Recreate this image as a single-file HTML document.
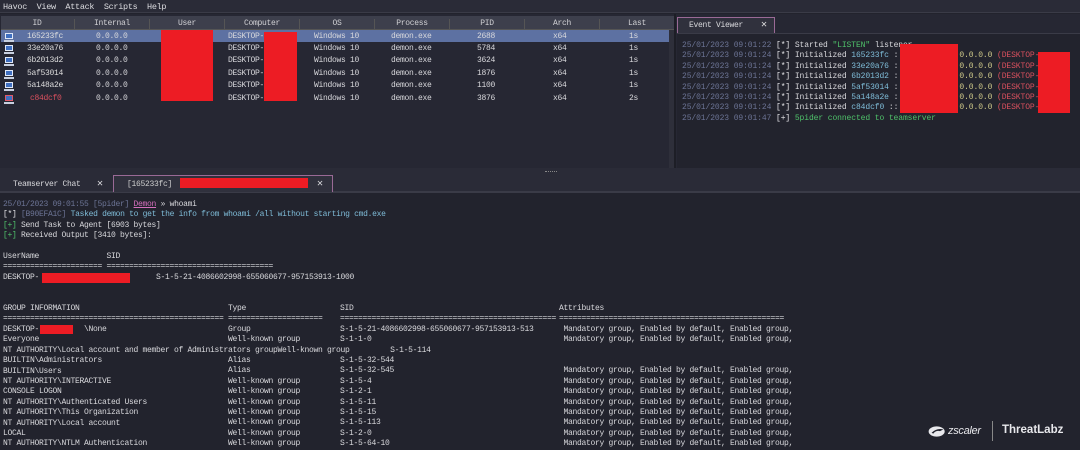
<!DOCTYPE html>
<html><head><meta charset="utf-8"><style>
*{margin:0;padding:0;box-sizing:border-box}
body{width:1080px;height:450px;overflow:hidden;background:#22232d;font-family:"Liberation Mono",monospace;font-size:8px;letter-spacing:-0.3px;color:#d8d8dc;position:relative}
.a{position:absolute;white-space:pre}
.r{position:absolute;background:#ed1c24}
.ts{color:#6b7394}.g{color:#4fc26a}.c{color:#7fbcd8}.y{color:#cfc98a}.rd{color:#d9505e}.w{color:#e4e4e8}
</style></head><body>
<!-- menu -->
<div class="a" style="left:0;top:0;width:1080px;height:13px;background:#2a2b37;border-bottom:1px solid #3a3b47"></div>
<div class="a" style="left:3px;top:2px;font-size:8.5px;color:#dcdce0">Havoc  View  Attack  Scripts  Help</div>
<!-- table panel -->
<div class="a" style="left:0;top:14px;width:674px;height:154px;background:#262733"></div>
<div class="a" style="left:1px;top:16px;width:673px;height:14px;background:#3d3f4c;border-bottom:1px solid #555"></div>
<div class="a" style="left:1px;top:30px;width:668px;height:12px;background:#5d71a2"></div>
<div class="a" style="left:669px;top:30px;width:5px;height:138px;background:#2e2f3a"></div>
<div id="hd"></div>
<!-- event viewer -->
<div class="a" style="left:674px;top:14px;width:406px;height:154px;background:#262733;border-left:2px solid #1d1e26"></div>
<div class="a" style="left:677px;top:17px;width:98px;height:16px;background:#30313d;border:1px solid #9a6a96;border-bottom:none"></div>
<div class="a" style="left:689px;top:21px;color:#d8d8dc">Event Viewer</div>
<div class="a" style="left:761px;top:19px;font-size:10px;color:#ddd">✕</div>
<div class="a" style="left:677px;top:33px;width:403px;height:135px;background:#22232d;border-top:1px solid #3a3b47"></div>
<div class="a" style="left:682px;top:41px;line-height:10.4px;letter-spacing:-0.1px"><span class="ts">25/01/2023 09:01:22</span> <span class="w">[*]</span> Started <span class="g">"LISTEN"</span> listener
<span class="ts">25/01/2023 09:01:24</span> <span class="w">[*]</span> Initialized <span class="c">165233fc</span> ::            <span class="y">0.0.0.0</span> <span class="rd">(DESKTOP-</span>
<span class="ts">25/01/2023 09:01:24</span> <span class="w">[*]</span> Initialized <span class="c">33e20a76</span> ::            <span class="y">0.0.0.0</span> <span class="rd">(DESKTOP-</span>
<span class="ts">25/01/2023 09:01:24</span> <span class="w">[*]</span> Initialized <span class="c">6b2013d2</span> ::            <span class="y">0.0.0.0</span> <span class="rd">(DESKTOP-</span>
<span class="ts">25/01/2023 09:01:24</span> <span class="w">[*]</span> Initialized <span class="c">5af53014</span> ::            <span class="y">0.0.0.0</span> <span class="rd">(DESKTOP-</span>
<span class="ts">25/01/2023 09:01:24</span> <span class="w">[*]</span> Initialized <span class="c">5a148a2e</span> ::            <span class="y">0.0.0.0</span> <span class="rd">(DESKTOP-</span>
<span class="ts">25/01/2023 09:01:24</span> <span class="w">[*]</span> Initialized <span class="c">c84dcf0</span> ::             <span class="y">0.0.0.0</span> <span class="rd">(DESKTOP-H</span>
<span class="ts">25/01/2023 09:01:47</span> <span class="w">[+]</span> <span class="g">5pider connected to teamserver</span></div>
<div class="r" style="left:900px;top:44px;width:58px;height:69px"></div>
<div class="r" style="left:1038px;top:52px;width:32px;height:61px"></div>
<!-- splitter & tabs -->
<div class="a" style="left:0;top:168px;width:1080px;height:25px;background:#2a2b37"></div>
<div class="a" style="left:545px;top:171px;width:12px;height:2px;border-top:1px dotted #888"></div>
<div class="a" style="left:0;top:191px;width:1080px;height:2px;background:#3a3b47"></div>
<div class="a" style="left:13px;top:180px">Teamserver Chat</div>
<div class="a" style="left:97px;top:178px;font-size:10px">✕</div>
<div class="a" style="left:113px;top:175px;width:220px;height:17px;background:#30313d;border:1px solid #9a6a96;border-bottom:none"></div>
<div class="a" style="left:127px;top:180px;color:#ccc">[165233fc]</div>
<div class="r" style="left:180px;top:178px;width:128px;height:10px"></div>
<div class="a" style="left:317px;top:178px;font-size:10px">✕</div>
<!-- console -->
<div class="a" style="left:3px;top:200px;line-height:10.4px"><span class="ts">25/01/2023 09:01:55 [5pider]</span> <span style="color:#d56fbd;text-decoration:underline">Demon</span> » whoami
<span class="w">[*]</span> <span class="ts">[B90EFA1C]</span> <span class="c">Tasked demon to get the info from whoami /all without starting cmd.exe</span>
<span class="g">[+]</span> Send Task to Agent [6903 bytes]
<span class="g">[+]</span> Received Output [3410 bytes]:

UserName               SID
====================== =====================================
DESKTOP-                          S-1-5-21-4086602998-655060677-957153913-1000


GROUP INFORMATION
=================================================
DESKTOP-          \None
Everyone
NT AUTHORITY\Local account and member of Administrators groupWell-known group         S-1-5-114
BUILTIN\Administrators
BUILTIN\Users
NT AUTHORITY\INTERACTIVE
CONSOLE LOGON
NT AUTHORITY\Authenticated Users
NT AUTHORITY\This Organization
NT AUTHORITY\Local account
LOCAL
NT AUTHORITY\NTLM Authentication</div>
<div class="r" style="left:42px;top:273px;width:88px;height:10px"></div>
<div class="r" style="left:40px;top:325px;width:33px;height:9px"></div>
<div class="a" style="left:228px;top:304px;line-height:10.4px">Type
=====================
Group
Well-known group

Alias
Alias
Well-known group
Well-known group
Well-known group
Well-known group
Well-known group
Well-known group
Well-known group</div>
<div class="a" style="left:340px;top:304px;line-height:10.4px">SID
================================================
S-1-5-21-4086602998-655060677-957153913-513
S-1-1-0

S-1-5-32-544
S-1-5-32-545
S-1-5-4
S-1-2-1
S-1-5-11
S-1-5-15
S-1-5-113
S-1-2-0
S-1-5-64-10</div>
<div class="a" style="left:559px;top:304px;line-height:10.4px">Attributes
==================================================
 Mandatory group, Enabled by default, Enabled group,
 Mandatory group, Enabled by default, Enabled group,


 Mandatory group, Enabled by default, Enabled group,
 Mandatory group, Enabled by default, Enabled group,
 Mandatory group, Enabled by default, Enabled group,
 Mandatory group, Enabled by default, Enabled group,
 Mandatory group, Enabled by default, Enabled group,
 Mandatory group, Enabled by default, Enabled group,
 Mandatory group, Enabled by default, Enabled group,
 Mandatory group, Enabled by default, Enabled group,</div>
<!-- logo -->
<svg class="a" style="left:928px;top:426px" width="19" height="11" viewBox="0 0 22 13"><ellipse cx="10" cy="6.5" rx="9.5" ry="6" fill="#e8e8ec"/><path d="M4 8 Q10 2 18 4 L14 6 Q9 5 6 9Z" fill="#22232d"/></svg>
<div class="a" style="left:948px;top:425px;font-family:'Liberation Sans',sans-serif;font-style:italic;font-size:11px;letter-spacing:-0.3px;color:#e8e8ec">zscaler</div>
<div class="a" style="left:992px;top:421px;width:1px;height:20px;background:#888"></div>
<div class="a" style="left:1002px;top:424px;font-family:'Liberation Sans',sans-serif;font-weight:bold;font-size:11.5px;letter-spacing:0;color:#e8e8ec">ThreatLabz</div>
<script>
var cols=['ID','Internal','User','Computer','OS','Process','PID','Arch','Last'],h='';
cols.forEach(function(c,i){h+='<div class="a" style="left:'+(i*75)+'px;top:19px;width:75px;text-align:center;color:#d0d0d4;border-right:1px solid #555;height:10px">'+c+'</div>';});
var rows=[['165233fc','2688','1s'],['33e20a76','5784','1s'],['6b2013d2','3624','1s'],['5af53014','1876','1s'],['5a148a2e','1100','1s'],['c84dcf0','3876','2s']];
rows.forEach(function(r,i){var t=31.5+i*12.4;
h+='<svg class="a" style="left:4px;top:'+(t+1)+'px" width="10" height="9"><rect x="1" y="0" width="8" height="6" fill="'+(i==5?'#e05a6a':'#e0e8f8')+'"/><rect x="2" y="1" width="6" height="4" fill="#3f6fc0"/><rect x="0" y="7" width="10" height="2" fill="#c8d0e0"/></svg>';
h+='<div class="a" style="left:'+(i==5?30:27)+'px;top:'+t+'px;color:'+(i==5?'#d9505e':'#ddd')+'">'+r[0]+'</div>';
h+='<div class="a" style="left:96px;top:'+t+'px">0.0.0.0</div><div class="a" style="left:228px;top:'+t+'px">DESKTOP-</div><div class="a" style="left:314px;top:'+t+'px">Windows 10</div><div class="a" style="left:391px;top:'+t+'px">demon.exe</div><div class="a" style="left:477px;top:'+t+'px">'+r[1]+'</div><div class="a" style="left:553px;top:'+t+'px">x64</div><div class="a" style="left:629px;top:'+t+'px">'+r[2]+'</div>';});
h+='<div class="r" style="left:161px;top:30px;width:52px;height:71px"></div><div class="r" style="left:264px;top:32px;width:33px;height:69px"></div>';
document.getElementById('hd').innerHTML=h;
</script>
</body></html>
